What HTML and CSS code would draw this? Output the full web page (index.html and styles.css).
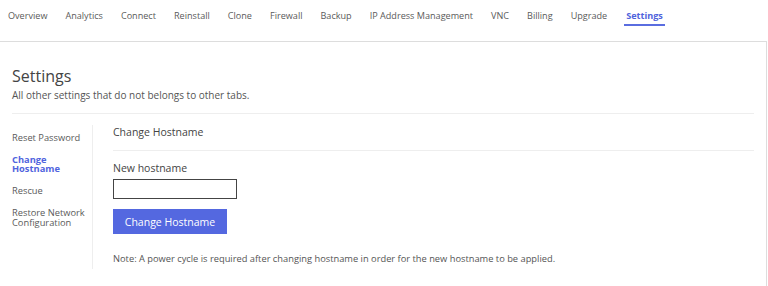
FILE: index.html
```html
<!DOCTYPE html>
<html>
<head>
<meta charset="utf-8">
<link rel="stylesheet" href="styles.css">
</head>
<body>
<nav class="tabs">
  <a class="tab">Overview</a>
  <a class="tab">Analytics</a>
  <a class="tab">Connect</a>
  <a class="tab">Reinstall</a>
  <a class="tab">Clone</a>
  <a class="tab">Firewall</a>
  <a class="tab">Backup</a>
  <a class="tab">IP Address Management</a>
  <a class="tab">VNC</a>
  <a class="tab">Billing</a>
  <a class="tab">Upgrade</a>
  <a class="tab active">Settings</a>
</nav>
<section class="panel">
  <h1 class="title">Settings</h1>
  <p class="subtitle">All other settings that do not belongs to other tabs.</p>
  <div class="body">
    <ul class="side">
      <li class="side-item">Reset Password</li>
      <li class="side-item current">Change Hostname</li>
      <li class="side-item">Rescue</li>
      <li class="side-item">Restore Network Configuration</li>
    </ul>
    <div class="content">
      <h2 class="section">Change Hostname</h2>
      <label class="label">New hostname</label>
      <input class="field" type="text">
      <button class="btn">Change Hostname</button>
      <p class="note">Note: A power cycle is required after changing hostname in order for the new hostname to be applied.</p>
    </div>
  </div>
</section>
</body>
</html>
```
FILE: styles.css
```css
* { box-sizing: border-box; }
body {
  margin: 0;
  font-family: "Open Sans", "Liberation Sans", sans-serif;
  color: #555;
  background: #fff;
}
.tabs {
  display: flex;
  gap: 18px;
  height: 41px;
  padding: 9px 0 0 8px;
}
.tab {
  font-size: 9.1px;
  color: #5a5a5a;
  line-height: 14px;
  height: 17px;
}
.tab.active {
  font-weight: 700;
  color: #4f63dc;
  border-bottom: 2px solid #5a6de0;
  padding: 0 2px;
  margin-left: -1px;
}
.panel {
  border-top: 1px solid #ddd;
  border-right: 1px solid #ddd;
  margin-right: 1px;
  height: 245px;
  padding: 0 12px;
}
.title {
  margin: 0;
  padding-top: 24px;
  font-size: 16px;
  font-weight: 400;
  color: #444;
  line-height: 20px;
}
.subtitle {
  margin: 0;
  padding-top: 2px;
  font-size: 10px;
  line-height: 14px;
  color: #555;
  padding-bottom: 11px;
  border-bottom: 1px solid #eee;
}
.body {
  display: flex;
  padding-top: 11px;
}
.side {
  list-style: none;
  margin: 0;
  padding: 8px 0 0;
  width: 81px;
  border-right: 1px solid #eee;
  height: 144px;
}
.side-item {
  font-size: 9.3px;
  line-height: 9.7px;
  color: #5a5a5a;
  margin-bottom: 12px;
}
.side-item.current {
  font-weight: 700;
  color: #5064de;
  width: 50px;
}
.content {
  flex: 1;
  padding-left: 20px;
}
.section {
  margin: 0;
  font-size: 10.5px;
  font-weight: 400;
  color: #444;
  line-height: 14px;
  padding-bottom: 11px;
  border-bottom: 1px solid #eee;
}
.label {
  display: block;
  font-size: 10.5px;
  color: #444;
  line-height: 14px;
  margin-top: 10px;
}
.field {
  display: block;
  width: 124px;
  height: 20px;
  margin-top: 4px;
  border: 1px solid #444;
  border-radius: 0;
}
.btn {
  display: block;
  margin-top: 10px;
  width: 114px;
  height: 25px;
  background: #5468e0;
  border: none;
  color: #fff;
  font-family: inherit;
  font-size: 10.5px;
}
.note {
  margin: 19px 0 0;
  font-size: 9.3px;
  line-height: 12px;
  color: #555;
}
```
